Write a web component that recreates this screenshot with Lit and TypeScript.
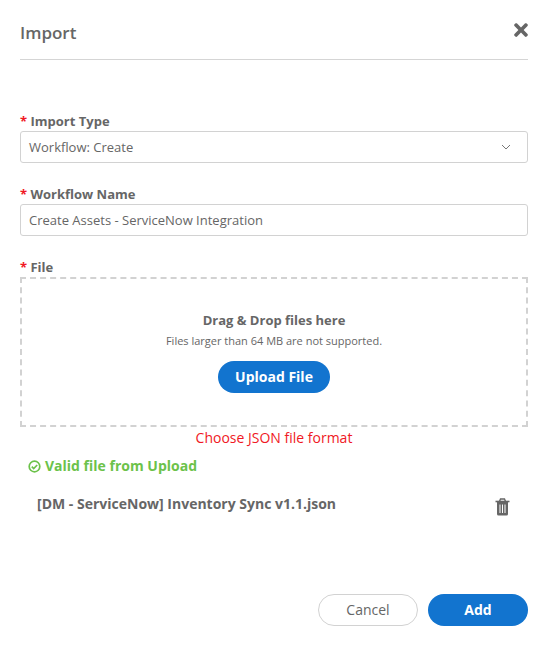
import { LitElement, html, css } from "lit";
import { customElement } from "lit/decorators.js";

@customElement("app-root")
export class AppRoot extends LitElement {
  static styles = css`
    :host { display: block; width: 548px; height: 646px; background: #fff; font-family: "Open Sans", sans-serif; color: #666; box-sizing: border-box; padding: 0 20px; }
    .head { display: flex; justify-content: space-between; align-items: flex-start; height: 59px; border-bottom: 1px solid #d5d5d5; }
    h1 { margin: 21px 0 0; font-size: 17px; line-height: 24px; font-weight: 600; }
    .close { width: 14px; height: 20px; margin: 20px 0 0; fill: #666; }
    .form { display: flex; flex-direction: column; padding-top: 52px; }
    label { display: block; font-size: 13px; font-weight: 700; line-height: 18px; margin-bottom: 1px; }
    label span { color: #f01824; }
    .field { height: 32px; box-sizing: border-box; border: 1px solid #d2d2d2; border-radius: 3px; display: flex; align-items: center; justify-content: space-between; padding: 0 8px; font-size: 13px; margin-bottom: 22px; }
    .chev { margin-right: 8px; }
    .drop { height: 150px; box-sizing: border-box; border: 2px dashed #d2d2d2; display: flex; flex-direction: column; align-items: center; padding-top: 32px; }
    .drop b { font-size: 13px; line-height: 18px; }
    .drop small { font-size: 11px; line-height: 14px; margin-top: 5px; }
    button { font-family: inherit; border-radius: 16px; height: 32px; font-size: 14px; font-weight: 700; border: none; background: #1274cf; color: #fff; padding: 0 0 2px; }
    .upload { width: 112px; margin-top: 13px; }
    .err { color: #f01824; text-align: center; font-size: 14px; line-height: 19px; margin-top: 1px; }
    .valid { display: flex; align-items: center; gap: 4px; margin: 9px 0 0 8px; color: #6cc24a; font-size: 14px; font-weight: 700; line-height: 20px; }
    .filerow { display: flex; justify-content: space-between; align-items: flex-start; margin: 18px 0 0 17px; padding-right: 18px; height: 30px; font-size: 14px; font-weight: 700; line-height: 20px; }
    .trash { margin-top: 4px; }
    .actions { display: flex; justify-content: flex-end; gap: 10px; margin-top: 70px; }
    .actions button { width: 100px; }
    .cancel { background: #fff; border: 1px solid #d2d2d2; color: #666; font-weight: 400; }
  `;
  render() {
    return html`
      <div class="head"><h1>Import</h1>
        <svg class="close" viewBox="0 0 352 512"><path d="M242.72 256l100.07-100.07c12.28-12.28 12.28-32.19 0-44.48l-22.24-22.24c-12.28-12.28-32.19-12.28-44.48 0L176 189.28 75.93 89.21c-12.28-12.28-32.19-12.28-44.48 0L9.21 111.45c-12.28 12.28-12.28 32.19 0 44.48L109.28 256 9.21 356.07c-12.28 12.28-12.28 32.19 0 44.48l22.24 22.24c12.28 12.28 32.2 12.28 44.48 0L176 322.72l100.07 100.07c12.28 12.28 32.2 12.28 44.48 0l22.24-22.24c12.28-12.28 12.28-32.19 0-44.48L242.72 256z"/></svg>
      </div>
      <div class="form">
        <label><span>*</span> Import Type</label>
        <div class="field">Workflow: Create
          <svg class="chev" width="10" height="6" viewBox="0 0 10 6"><path d="M1 1l4 4 4-4" fill="none" stroke="#777" stroke-width="1"/></svg>
        </div>
        <label><span>*</span> Workflow Name</label>
        <div class="field">Create Assets - ServiceNow Integration</div>
        <label><span>*</span> File</label>
        <div class="drop">
          <b>Drag &amp; Drop files here</b>
          <small>Files larger than 64 MB are not supported.</small>
          <button class="upload">Upload File</button>
        </div>
        <div class="err">Choose JSON file format</div>
        <div class="valid">
          <svg width="13" height="13" viewBox="0 0 13 13"><circle cx="6.500" cy="6.500" r="5.300" fill="none" stroke="#6cc24a" stroke-width="1.700"/><path d="M3.800 6.700 5.700 8.600 9.200 5" fill="none" stroke="#6cc24a" stroke-width="1.700"/></svg>
          Valid file from Upload
        </div>
        <div class="filerow">[DM - ServiceNow] Inventory Sync v1.1.json
          <svg class="trash" width="15" height="18" viewBox="0 0 15 18"><path d="M0.500 3.500h14" stroke="#666" stroke-width="1.600"/><path d="M4.500 3.500 5.500 1h4l1 2.500" fill="none" stroke="#666" stroke-width="1.400"/><path d="M2 4h11v12a1.500 1.500 0 0 1-1.500 1.500h-8A1.500 1.500 0 0 1 2 16z" fill="#666"/><path d="M5 6.500v8.500M7.500 6.500v8.500M10 6.500v8.500" stroke="#fff" stroke-width="1"/></svg>
        </div>
        <div class="actions"><button class="cancel">Cancel</button><button>Add</button></div>
      </div>`;
  }
}
